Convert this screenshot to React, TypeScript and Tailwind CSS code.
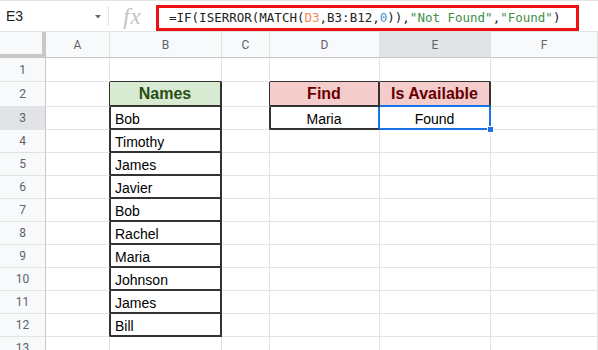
import React from "react";

const NAMES = ["Bob", "Timothy", "James", "Javier", "Bob", "Rachel", "Maria", "Johnson", "James", "Bill"];
const COLS = ["A", "B", "C", "D", "E", "F"];
const ROWS = Array.from({ length: 13 }, (_, i) => i + 1);

function rightCls(r: number, c: number): string {
  if (c === 1 && r >= 2 && r <= 12) return "border-r border-r-[#333]";
  if (c === 2 && r >= 2 && r <= 12) return "border-r-2 border-r-[#333]";
  if (c === 3 && r >= 2 && r <= 3) return "border-r border-r-[#333]";
  if (c === 4 && r === 2) return "border-r-2 border-r-[#333]";
  if (c === 4 && r === 3) return "border-r-2 border-r-[#1a73e8]";
  if (c === 5 && r === 2) return "border-r-2 border-r-[#333]";
  if (c === 5 && r === 3) return "border-r-2 border-r-[#1a73e8]";
  return "border-r border-r-[#e2e3e3]";
}

function bottomCls(r: number, c: number): string {
  if (c === 2 && r === 1) return "border-b border-b-[#333]";
  if (c === 2 && r >= 2 && r <= 12) return "border-b-2 border-b-[#333]";
  if ((c === 4 || c === 5) && r === 1) return "border-b border-b-[#333]";
  if (c === 4 && (r === 2 || r === 3)) return "border-b-2 border-b-[#333]";
  if (c === 5 && (r === 2 || r === 3)) return "border-b-2 border-b-[#1a73e8]";
  return "border-b border-b-[#e2e3e3]";
}

function shadowCls(r: number, c: number): string {
  if (c === 2 && r === 2) return "shadow-[inset_1px_1px_0_#333]";
  if (c === 2 && r >= 3 && r <= 12) return "shadow-[inset_1px_0_0_#333]";
  if (c === 4 && r === 2) return "shadow-[inset_1px_1px_0_#333]";
  if (c === 4 && r === 3) return "shadow-[inset_1px_0_0_#333]";
  if (c === 5 && r === 2) return "shadow-[inset_0_1px_0_#333]";
  return "";
}

function Content({ r, c }: { r: number; c: number }) {
  if (r === 2 && c === 2)
    return <div className="flex h-full w-full items-center justify-center bg-[#d9ead3] text-[16px] font-bold text-[#274e13]">Names</div>;
  if (r === 2 && c === 4)
    return <div className="flex h-full w-full items-center justify-center bg-[#f4cccc] text-[16px] font-bold text-[#660000]">Find</div>;
  if (r === 2 && c === 5)
    return <div className="flex h-full w-full items-center justify-center bg-[#f4cccc] text-[16px] font-bold text-[#660000]">Is Available</div>;
  if (r === 3 && c === 4)
    return <div className="flex h-full w-full items-center justify-center pt-[3px] text-[14px] text-black">Maria</div>;
  if (r === 3 && c === 5)
    return <div className="flex h-full w-full items-center justify-center pt-[3px] text-[14px] text-black">Found</div>;
  if (c === 2 && r >= 3 && r <= 12)
    return <div className="flex h-full w-full items-center pl-[5px] pt-[3px] text-[14px] text-black">{NAMES[r - 3]}</div>;
  return null;
}

export default function App() {
  return (
    <div
      className="h-[350px] w-[598px] overflow-hidden bg-white"
      style={{ fontFamily: '"Liberation Sans", Arial, sans-serif' }}
    >
      {/* Formula bar */}
      <div className="flex h-[32px] items-stretch border-t border-b border-[#e2e3e3]">
        <div className="flex w-[108px] items-center justify-between pl-[6px] pr-[7px]">
          <span className="text-[14px] text-[#202124]">E3</span>
          <svg width="6" height="4" viewBox="0 0 6 4" className="mt-[1px]">
            <path d="M0 0 L6 0 L3 3.5 Z" fill="#6b6b6b" />
          </svg>
        </div>
        <div className="my-[5px] w-[1px] bg-[#e2e3e3]" />
        <div className="flex w-[47px] items-center justify-center">
          <span
            className="text-[23px] italic leading-none tracking-[1px] text-[#c3c3c3]"
            style={{ fontFamily: '"Liberation Serif", "Times New Roman", serif' }}
          >
            fx
          </span>
        </div>
        <div className="mt-[4px] mb-[0px] flex h-[26px] w-[423px] items-center border-[3px] border-[#ee1111] pl-[10px]">
          <span
            className="whitespace-nowrap text-[12.5px] text-[#222]"
            style={{ fontFamily: '"DejaVu Sans Mono", "Liberation Mono", monospace' }}
          >
            =IF(ISERROR(MATCH(<span className="text-[#ef8550]">D3</span>,B3:B12,
            <span className="text-[#4a8fd0]">0</span>)),
            <span className="text-[#3d8f48]">"Not Found"</span>,
            <span className="text-[#3d8f48]">"Found"</span>)
          </span>
        </div>
      </div>

      {/* Grid */}
      <div className="grid grid-cols-[46px_64px_112px_48px_110px_111px_107px] grid-rows-[26px_24px_25px_repeat(11,23px)]">
        {/* Corner */}
        <div className="border-r-4 border-b-4 border-[#c7c7c7] bg-[#f8f9fa]" />
        {COLS.map((col) => (
          <div
            key={col}
            className={
              "flex items-center justify-center border-r border-b border-r-[#e2e3e3] border-b-[#c4c7c5] text-[12px] text-[#5f6368] " +
              (col === "E" ? "bg-[#e1e3e6]" : "bg-[#f8f9fa]")
            }
            style={{ fontFamily: "Roboto, Arial, sans-serif" }}
          >
            {col}
          </div>
        ))}
        {ROWS.map((r) => (
          <React.Fragment key={r}>
            <div
              className={
                "flex items-center justify-center border-r border-b border-r-[#c4c7c5] border-b-[#e2e3e3] text-[12px] text-[#5f6368] " +
                (r === 3 ? "bg-[#e1e3e6]" : "bg-[#f8f9fa]")
              }
              style={{ fontFamily: "Roboto, Arial, sans-serif" }}
            >
              {r}
            </div>
            {COLS.map((_, i) => {
              const c = i + 1;
              return (
                <div
                  key={c}
                  className={
                    "relative flex overflow-visible whitespace-nowrap " +
                    rightCls(r, c) +
                    " " +
                    bottomCls(r, c) +
                    " " +
                    shadowCls(r, c)
                  }
                >
                  <Content r={r} c={c} />
                  {r === 3 && c === 5 && (
                    <div className="absolute right-[-5px] bottom-[-5px] z-10 h-[7px] w-[7px] border border-white bg-[#1a73e8]" />
                  )}
                </div>
              );
            })}
          </React.Fragment>
        ))}
      </div>
    </div>
  );
}
